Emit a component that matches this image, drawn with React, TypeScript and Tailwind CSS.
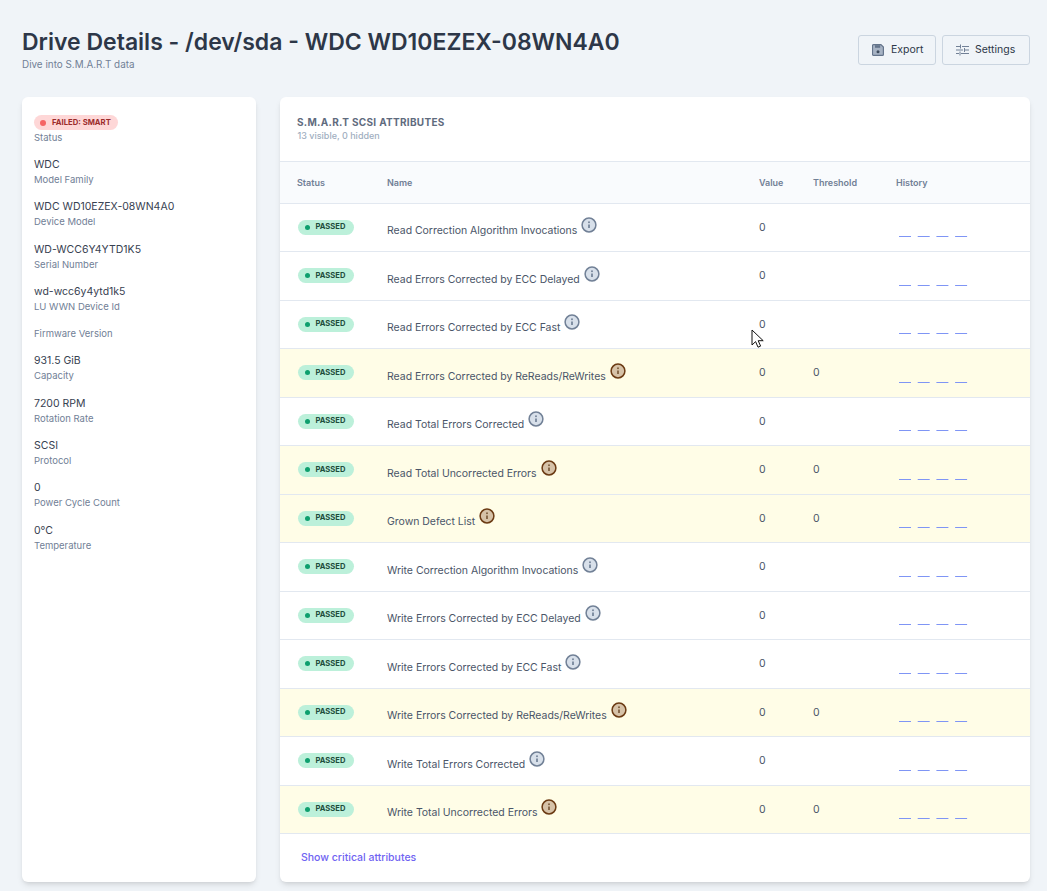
import React from "react";

const rows: [string, boolean][] = [
  ["Read Correction Algorithm Invocations", false],
  ["Read Errors Corrected by ECC Delayed", false],
  ["Read Errors Corrected by ECC Fast", false],
  ["Read Errors Corrected by ReReads/ReWrites", true],
  ["Read Total Errors Corrected", false],
  ["Read Total Uncorrected Errors", true],
  ["Grown Defect List", true],
  ["Write Correction Algorithm Invocations", false],
  ["Write Errors Corrected by ECC Delayed", false],
  ["Write Errors Corrected by ECC Fast", false],
  ["Write Errors Corrected by ReReads/ReWrites", true],
  ["Write Total Errors Corrected", false],
  ["Write Total Uncorrected Errors", true],
];

const details: [string, string][] = [
  ["WDC", "Model Family"],
  ["WDC WD10EZEX-08WN4A0", "Device Model"],
  ["WD-WCC6Y4YTD1K5", "Serial Number"],
  ["wd-wcc6y4ytd1k5", "LU WWN Device Id"],
  ["", "Firmware Version"],
  ["931.5 GiB", "Capacity"],
  ["7200 RPM", "Rotation Rate"],
  ["SCSI", "Protocol"],
  ["0", "Power Cycle Count"],
  ["0°C", "Temperature"],
];

function Info({ critical }: { critical: boolean }) {
  const stroke = critical ? "#6b3a13" : "#718096";
  const fill = critical ? "#d6c2a8" : "#d8e0ea";
  const mark = critical ? "#7b5a3a" : "#718096";
  return (
    <svg width="16" height="16" viewBox="0 0 16 16" className="ml-[4px] mb-[12px] shrink-0">
      <circle cx="8" cy="8" r="6.9" fill={fill} stroke={stroke} strokeWidth="1.5" />
      <path d="M8 7.4v3.6" stroke={mark} strokeWidth="1.7" />
      <circle cx="8" cy="5.2" r="0.95" fill={mark} />
    </svg>
  );
}

function Spark() {
  return (
    <svg width="70" height="3" viewBox="0 0 70 3" className="block">
      {[0, 1, 2, 3].map((i) => (
        <rect key={i} x={1 + i * 18.7} y="1" width="12" height="1" fill="#7f95f5" />
      ))}
    </svg>
  );
}

export default function App() {
  return (
    <div className="relative min-h-[891px] bg-[#f0f4f8] pl-[22px] pr-[17px] pt-[25px] pb-[9px] font-['Inter',sans-serif] overflow-hidden">
      <div className="flex items-start justify-between h-[72px]">
        <div>
          <h1 className="text-[23px] leading-[34px] font-semibold text-[#2d3748]">Drive Details - /dev/sda - WDC WD10EZEX-08WN4A0</h1>
          <p className="text-[9.9px] leading-[10px] text-[#718096]">Dive into S.M.A.R.T data</p>
        </div>
        <div className="flex gap-[6px] mt-[10px]">
          <button className="flex items-center h-[30px] w-[78px] pl-[13px] rounded-[3px] border border-[#cbd5e0] text-[10.5px] text-[#2d3748]">
            <svg width="12" height="12" viewBox="0 0 12 12" className="mr-[7px]">
              <path d="M1.5 0.6h7.4l2.5 2.5v7.3a1 1 0 0 1-1 1h-8.9a1 1 0 0 1-1-1v-8.8a1 1 0 0 1 1-1z" fill="#a7b3c4" stroke="#64748b" strokeWidth="1.2" />
              <rect x="3" y="1.2" width="5.2" height="2.6" fill="#64748b" />
              <circle cx="6" cy="7.8" r="1.5" fill="#3d4a5c" />
            </svg>
            Export
          </button>
          <button className="flex items-center h-[30px] w-[88px] pl-[13px] rounded-[3px] border border-[#cbd5e0] text-[10.5px] text-[#2d3748]">
            <svg width="13" height="12" viewBox="0 0 13 12" className="mr-[6px]" stroke="#718096" strokeWidth="1">
              <path d="M0 2.5h4M6 2.5h7M4.5 0.5v4M0 6h7M9 6h4M8.5 4v4M0 9.5h3M5 9.5h8M4 7.5v4" fill="none" />
            </svg>
            Settings
          </button>
        </div>
      </div>

      <div className="flex gap-[24px] h-[785px]">
        <div className="w-[234px] rounded-[6px] bg-white shadow-md pl-[12px] pt-[18px]">
          <div className="mb-[12px]">
            <span className="flex items-center h-[15px] w-[84px] rounded-full bg-[#fed7d7] pl-[6px] text-[7.7px] font-bold text-[#9b2c2c]">
              <span className="w-[6px] h-[6px] rounded-full bg-[#f56565] mr-[6px]" />
              FAILED: SMART
            </span>
            <div className="text-[9.5px] leading-[15px] text-[#718096]">Status</div>
          </div>
          {details.map(([v, l]) => (
            <div key={l} className="mb-[11.8px]">
              {v && <div className="text-[10.5px] leading-[15px] text-[#374151]">{v}</div>}
              <div className="text-[9.5px] leading-[15.5px] text-[#718096]">{l}</div>
            </div>
          ))}
        </div>

        <div className="w-[750px] rounded-[6px] bg-white shadow-md overflow-hidden">
          <div className="h-[65px] pl-[17px] pt-[19px] border-b border-[#e2e8f0]">
            <div className="text-[10px] leading-[12px] font-bold tracking-[0.03em] text-[#5f6b7e]">S.M.A.R.T SCSI ATTRIBUTES</div>
            <div className="text-[9px] leading-[16px] font-medium text-[#a0aec0] pl-[0.5px]">13 visible, 0 hidden</div>
          </div>
          <div className="flex items-center h-[41.5px] bg-[#f9fbfd] border-b border-[#e2e8f0] text-[9px] font-semibold text-[#718096]">
            <div className="w-[107px] pl-[17px]">Status</div>
            <div className="w-[372px]">Name</div>
            <div className="w-[54px]">Value</div>
            <div className="w-[83px]">Threshold</div>
            <div>History</div>
          </div>
          {rows.map(([name, critical]) => (
            <div key={name} className={`flex h-[48.5px] border-b border-[#e2e8f0] ${critical ? "bg-[#fffde7]" : ""}`}>
              <div className="w-[107px] pl-[18px] pt-[16px]">
                <span className="flex items-center h-[15px] w-[56px] rounded-full bg-[#bcf0da] pl-[6.5px] text-[7.6px] font-bold text-[#1f4d3c]">
                  <span className="w-[5px] h-[5px] rounded-full bg-[#0e9f6e] mr-[6px]" />
                  PASSED
                </span>
              </div>
              <div className="w-[372px] flex items-center text-[10.5px] tracking-[-0.03px] text-[#4a5568] pt-[8px]">
                {name}
                <Info critical={critical} />
              </div>
              <div className="w-[57px] pt-[16px] text-[10.5px] leading-[15px] text-[#4a5568]">0</div>
              <div className="w-[80px] pt-[16px] text-[10.5px] leading-[15px] text-[#4a5568] -ml-[3px]">{critical ? "0" : ""}</div>
              <div className="pt-[31.5px] pl-[5px]"><Spark /></div>
            </div>
          ))}
          <div className="pl-[21px] pt-[15.5px] text-[10.5px] leading-[16px] font-medium text-[#6f63f2]">Show critical attributes</div>
        </div>
      </div>

      <svg width="14" height="20" viewBox="0 0 14 20" className="absolute left-[751px] top-[329px]">
        <path d="M1 1v15l3.6-3.4 2.4 5.6 2.6-1.1-2.4-5.4h5z" fill="#fff" stroke="#111" strokeWidth="1" />
      </svg>
    </div>
  );
}
